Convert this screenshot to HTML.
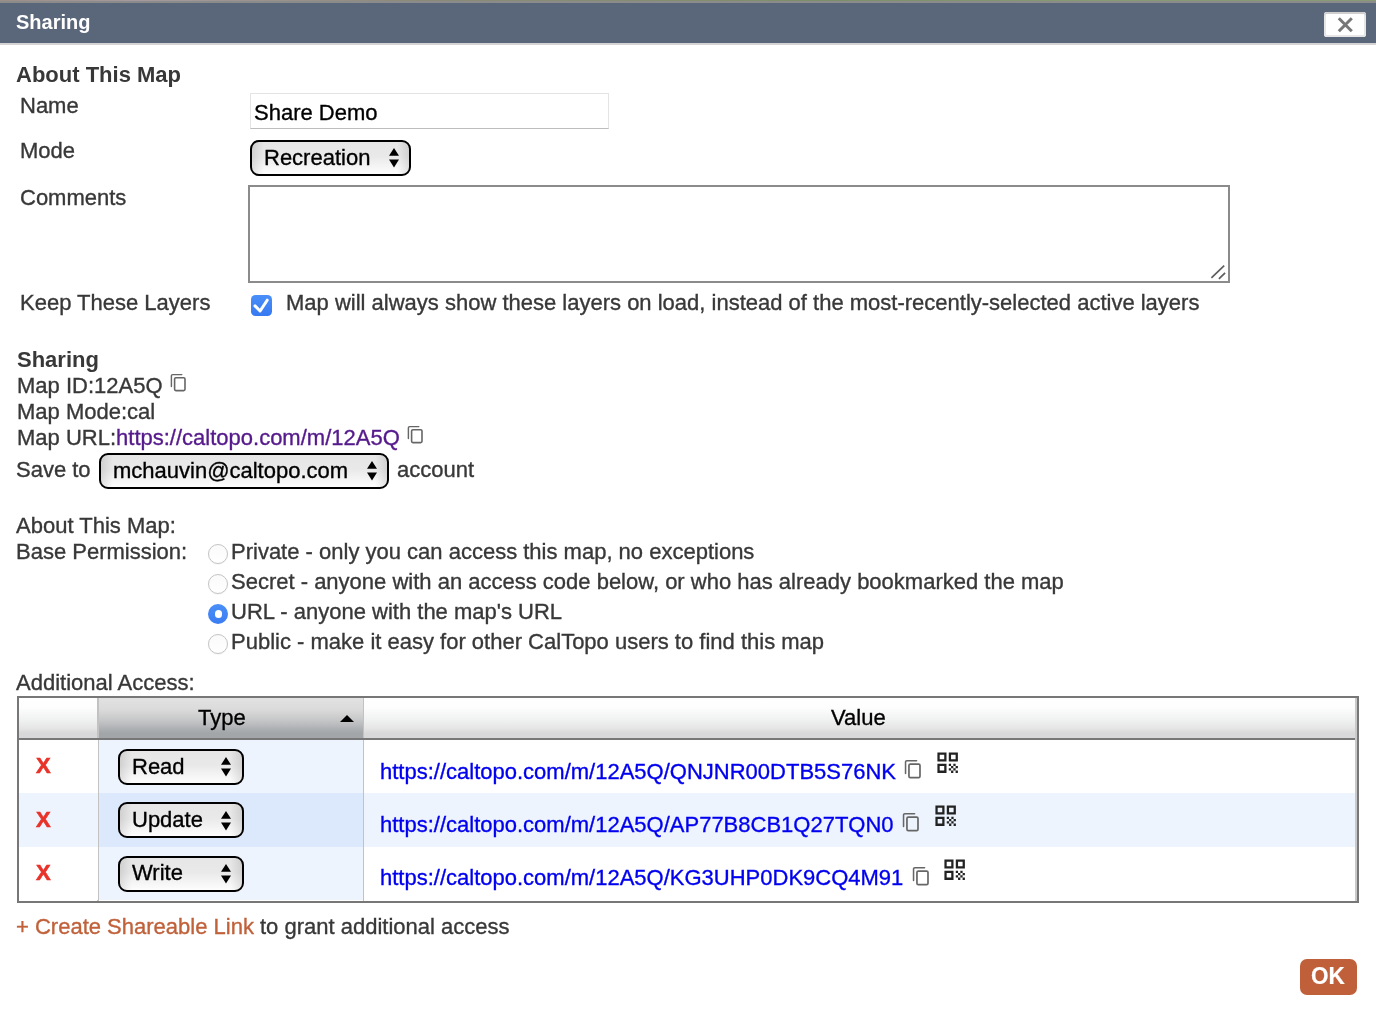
<!DOCTYPE html>
<html><head><meta charset="utf-8">
<style>
html,body{margin:0;padding:0;}
body{-webkit-font-smoothing:antialiased;width:1376px;height:1012px;overflow:hidden;background:#fff;position:relative;font-family:"Liberation Sans",sans-serif;color:#383838;}
.a{position:absolute;}
.t{position:absolute;will-change:transform;white-space:pre;font-size:22px;line-height:26px;}
.b{font-weight:bold;}
.t:not(.b),.st{-webkit-text-stroke:0.35px currentColor;}
.strip{left:0;top:0;width:1376px;height:1px;background:linear-gradient(90deg,#9a8f86,#a49aa0 10%,#8c8a7a 30%,#7d8f6a 60%,#879a72 80%,#8a9a78);}
.gline{left:0;top:1px;width:1376px;height:2px;background:#8b8b8b;}
.hdr{left:0;top:3px;width:1376px;height:40px;background:#5a6679;}
.hbord{left:0;top:43px;width:1376px;height:2px;background:#d4d4d4;}
.close{left:1324px;top:12px;width:42px;height:25px;background:#fff;border-radius:3px;box-shadow:inset 0 2px 0 #cfcfcf, inset 2px 0 0 #e6e6e6, inset -2px 0 0 #e6e6e6, inset 0 -2px 0 #e6e6e6;}
.sel{position:absolute;box-sizing:border-box;border:2px solid #000;border-radius:9px;
 background:linear-gradient(180deg,#e6e6e6 0%,#e9e9e9 45%,#f6f6f6 80%,#fdfdfd 100%);}
.sel:before{content:"";position:absolute;left:0;top:0;bottom:0;width:12px;border-radius:7px 0 0 7px;background:linear-gradient(90deg,rgba(0,0,0,0.10),rgba(0,0,0,0));}
.sel:after{content:"";position:absolute;right:0;top:0;bottom:0;width:12px;border-radius:0 7px 7px 0;background:linear-gradient(270deg,rgba(0,0,0,0.10),rgba(0,0,0,0));}
.sel .st{position:absolute;will-change:transform;white-space:pre;font-size:22px;line-height:26px;color:#000;}
.arr{position:absolute;width:10px;height:20px;}
.copy{position:absolute;width:20px;height:20px;}
.qr{position:absolute;width:27px;height:27px;}
.radio{position:absolute;width:20px;height:20px;box-sizing:border-box;border-radius:50%;border:1px solid #c4c4c4;background:linear-gradient(180deg,#fafafa,#ffffff);box-shadow:0 0.5px 1px rgba(0,0,0,0.08);}
.radio.on{border:none;background:linear-gradient(180deg,#4a8ff8,#3a7cf2);box-shadow:none;}
.radio.on:after{content:"";position:absolute;left:6.25px;top:6.25px;width:7.5px;height:7.5px;border-radius:50%;background:#fff;}
.hg{background:linear-gradient(180deg,#ffffff 0%,#fdfdfd 25%,#f0f1f1 55%,#e6e6e7 75%,#d8d8da 88%,#d8d8da 100%);}
.hgs{background:linear-gradient(180deg,#e2e2e2 0%,#dadada 30%,#c6c7c8 55%,#b0b3b6 75%,#a2a6a9 88%,#a2a6a9 100%);}
</style></head><body>
<div class="a strip"></div>
<div class="a gline"></div>
<div class="a hdr"></div>
<div class="a hbord"></div>
<div class="t b" style="left:16.4px;top:10px;font-size:20px;line-height:24px;color:#fff;">Sharing</div>
<div class="a close"><svg width="42" height="25" style="position:absolute;left:0;top:0"><path d="M14.8 6.3 L27.8 19.3 M27.8 6.3 L14.8 19.3" stroke="#777" stroke-width="3" stroke-linecap="butt"/></svg></div>

<!-- About This Map -->
<div class="t b" style="left:15.7px;top:62px;">About This Map</div>
<div class="t" style="left:20px;top:93.4px;">Name</div>
<div class="t" style="left:20px;top:138.4px;">Mode</div>
<div class="t" style="left:20px;top:185.4px;">Comments</div>
<div class="t" style="left:20px;top:290.4px;">Keep These Layers</div>

<div class="a" style="left:250px;top:93px;width:359px;height:36px;box-sizing:border-box;border:1px solid #e4e4e4;border-bottom:1.5px solid #bdbdbd;background:#fff;"></div>
<div class="t" style="left:254px;top:100.4px;color:#000;">Share Demo</div>

<div class="sel" style="left:250px;top:140px;width:161px;height:36px;">
 <div class="st" style="left:11.6px;top:3.4px;">Recreation</div>
 <svg class="arr" style="left:137px;top:5.8px;" viewBox="0 0 10 20"><path d="M5 0 L10 7.8 L0 7.8Z M0 11.6 L10 11.6 L5 19.4Z" fill="#000"/></svg>
</div>

<div class="a" style="left:248px;top:185px;width:982px;height:98px;box-sizing:border-box;border:2px solid #8b8b8b;background:#fff;"></div>
<svg class="a" style="left:1208px;top:262px;" width="20" height="20" viewBox="0 0 20 20"><path d="M3.4 15.8 L16.2 3.7 M10.9 16.9 L17.1 10.8" stroke="#5e5e5e" stroke-width="1.7"/></svg>

<div class="a" style="left:251px;top:294.8px;width:20.8px;height:21px;border-radius:4.5px;background:linear-gradient(180deg,#4a8ff8,#3679f2);">
 <svg width="20" height="20" viewBox="0 0 20 20" style="position:absolute;left:0;top:0"><path d="M4 10.9 L9.1 16 L16.2 5.2" stroke="#fff" stroke-width="3" fill="none" stroke-linecap="round" stroke-linejoin="round"/></svg>
</div>
<div class="t" style="left:285.8px;top:290px;">Map will always show these layers on load, instead of the most-recently-selected active layers</div>

<div class="t b" style="left:16.8px;top:346.8px;">Sharing</div>
<div class="t" style="left:17px;top:372.8px;">Map ID:12A5Q</div>
<svg class="copy" style="left:169px;top:373px;width:19.2px;height:19.2px" viewBox="0 0 24 24"><path d="M3 17V3.6Q3 2 4.6 2H16" stroke="#666" stroke-width="1.8" fill="none" stroke-linecap="round"/><rect x="7" y="6" width="13" height="16" rx="1.6" stroke="#666" stroke-width="2" fill="none"/></svg>
<div class="t" style="left:17px;top:398.8px;">Map Mode:cal</div>
<div class="t" style="left:17px;top:424.5px;">Map URL:<span style="color:#551a8b">https://caltopo.com/m/12A5Q</span></div>
<svg class="copy" style="left:406px;top:425px;width:19.2px;height:19.2px" viewBox="0 0 24 24"><path d="M3 17V3.6Q3 2 4.6 2H16" stroke="#666" stroke-width="1.8" fill="none" stroke-linecap="round"/><rect x="7" y="6" width="13" height="16" rx="1.6" stroke="#666" stroke-width="2" fill="none"/></svg>
<div class="t" style="left:16.4px;top:456.8px;">Save to</div>
<div class="sel" style="left:99px;top:452.5px;width:289.5px;height:36px;"><div class="st" style="left:12px;top:3.9px;">mchauvin@caltopo.com</div><svg class="arr" style="left:265.9px;top:6.5px;" viewBox="0 0 10 20"><path d="M5 0 L10 7.8 L0 7.8Z M0 11.6 L10 11.6 L5 19.4Z" fill="#000"/></svg></div>
<div class="t" style="left:396.6px;top:457.4px;">account</div>
<div class="t" style="left:15.5px;top:513.4px;">About This Map:</div>
<div class="t" style="left:15.5px;top:539.1px;">Base Permission:</div>
<div class="radio" style="left:208.3px;top:544.2px;"></div>
<div class="t" style="left:231.4px;top:538.7px;">Private - only you can access this map, no exceptions</div>
<div class="radio" style="left:208.3px;top:574.2px;"></div>
<div class="t" style="left:231.4px;top:569.3px;">Secret - anyone with an access code below, or who has already bookmarked the map</div>
<div class="radio on" style="left:208.3px;top:604.2px;"></div>
<div class="t" style="left:231.4px;top:599.4px;">URL - anyone with the map's URL</div>
<div class="radio" style="left:208.3px;top:634.2px;"></div>
<div class="t" style="left:231.4px;top:629.4px;">Public - make it easy for other CalTopo users to find this map</div>
<div class="t" style="left:16.0px;top:669.7px;">Additional Access:</div>
<div class="a" style="left:17px;top:696px;width:1342px;height:206.6px;box-sizing:border-box;border:2px solid #777;background:#fff;"></div>
<div class="a hg" style="left:19px;top:698px;width:78.5px;height:40px;"></div>
<div class="a hgs" style="left:98.5px;top:698px;width:264.5px;height:40px;"></div>
<div class="a hg" style="left:364px;top:698px;width:991px;height:40px;"></div>
<div class="a" style="left:97.2px;top:698px;width:1.5px;height:202.7px;background:#c2c2c2;"></div>
<div class="a" style="left:362.5px;top:698px;width:1.5px;height:202.7px;background:#c2c2c2;"></div>
<div class="a" style="left:1355px;top:698px;width:2px;height:202.7px;background:#c9c9c9;"></div>
<div class="a" style="left:19px;top:738px;width:1336px;height:2px;background:#777;"></div>
<div class="t" style="left:197.5px;top:705.2px;color:#000;">Type</div>
<svg class="a" style="left:339.7px;top:715px;" width="14" height="7" viewBox="0 0 14 7"><path d="M7 0 L14 7 L0 7Z" fill="#000"/></svg>
<div class="t" style="left:831px;top:705.2px;color:#000;">Value</div>
<div class="a" style="left:19px;top:740.00px;width:78.5px;height:53.33px;background:#fff"></div>
<div class="a" style="left:98.5px;top:740.00px;width:264.5px;height:53.33px;background:#edf4fe"></div>
<div class="a" style="left:364px;top:740.00px;width:991px;height:53.33px;background:#fff"></div>
<div class="t b" style="left:35.7px;top:753.4px;color:#e8332a;-webkit-text-stroke:0.6px #e8332a;">X</div>
<div class="sel" style="left:118px;top:749.00px;width:125.5px;height:36px;"><div class="st" style="left:11.7px;top:2.6px;">Read</div><svg class="arr" style="left:100.7px;top:6.3px;" viewBox="0 0 10 20"><path d="M5 0 L10 7.8 L0 7.8Z M0 11.6 L10 11.6 L5 19.4Z" fill="#000"/></svg></div>
<div class="t" style="left:379.8px;top:758.6px;color:#0000ee;">https://caltopo.com/m/12A5Q/QNJNR00DTB5S76NK</div>
<svg class="copy" style="left:903.0px;top:758.5px;width:20.4px;height:20.4px" viewBox="0 0 24 24"><path d="M3 17V3.6Q3 2 4.6 2H16" stroke="#666" stroke-width="1.8" fill="none" stroke-linecap="round"/><rect x="7" y="6" width="13" height="16" rx="1.6" stroke="#666" stroke-width="2" fill="none"/></svg>
<svg class="qr" style="left:933.99px;top:748.89px;width:27.3px;height:27.3px" viewBox="0 0 24 24"><path fill="#222" d="M3 11h8V3H3v8zm2-6h4v4H5V5zM3 21h8v-8H3v8zm2-6h4v4H5v-4zM13 3v8h8V3h-8zm6 6h-4V5h4v4zM19 19h2v2h-2zM13 13h2v2h-2zM15 15h2v2h-2zM13 17h2v2h-2zM15 19h2v2h-2zM17 17h2v2h-2zM17 13h2v2h-2zM19 15h2v2h-2z"/></svg>
<div class="a" style="left:19px;top:793.33px;width:78.5px;height:53.33px;background:#edf4fe"></div>
<div class="a" style="left:98.5px;top:793.33px;width:264.5px;height:53.33px;background:#dce8fb"></div>
<div class="a" style="left:364px;top:793.33px;width:991px;height:53.33px;background:#edf4fe"></div>
<div class="t b" style="left:35.7px;top:806.7px;color:#e8332a;-webkit-text-stroke:0.6px #e8332a;">X</div>
<div class="sel" style="left:118px;top:802.33px;width:125.5px;height:36px;"><div class="st" style="left:11.7px;top:2.6px;">Update</div><svg class="arr" style="left:100.7px;top:6.3px;" viewBox="0 0 10 20"><path d="M5 0 L10 7.8 L0 7.8Z M0 11.6 L10 11.6 L5 19.4Z" fill="#000"/></svg></div>
<div class="t" style="left:379.8px;top:811.9px;color:#0000ee;">https://caltopo.com/m/12A5Q/AP77B8CB1Q27TQN0</div>
<svg class="copy" style="left:901.0999999999999px;top:811.6px;width:20.4px;height:20.4px" viewBox="0 0 24 24"><path d="M3 17V3.6Q3 2 4.6 2H16" stroke="#666" stroke-width="1.8" fill="none" stroke-linecap="round"/><rect x="7" y="6" width="13" height="16" rx="1.6" stroke="#666" stroke-width="2" fill="none"/></svg>
<svg class="qr" style="left:931.89px;top:801.99px;width:27.3px;height:27.3px" viewBox="0 0 24 24"><path fill="#222" d="M3 11h8V3H3v8zm2-6h4v4H5V5zM3 21h8v-8H3v8zm2-6h4v4H5v-4zM13 3v8h8V3h-8zm6 6h-4V5h4v4zM19 19h2v2h-2zM13 13h2v2h-2zM15 15h2v2h-2zM13 17h2v2h-2zM15 19h2v2h-2zM17 17h2v2h-2zM17 13h2v2h-2zM19 15h2v2h-2z"/></svg>
<div class="a" style="left:19px;top:846.66px;width:78.5px;height:53.33px;background:#fff"></div>
<div class="a" style="left:98.5px;top:846.66px;width:264.5px;height:53.33px;background:#edf4fe"></div>
<div class="a" style="left:364px;top:846.66px;width:991px;height:53.33px;background:#fff"></div>
<div class="t b" style="left:35.7px;top:860.1px;color:#e8332a;-webkit-text-stroke:0.6px #e8332a;">X</div>
<div class="sel" style="left:118px;top:855.66px;width:125.5px;height:36px;"><div class="st" style="left:11.7px;top:2.6px;">Write</div><svg class="arr" style="left:100.7px;top:6.3px;" viewBox="0 0 10 20"><path d="M5 0 L10 7.8 L0 7.8Z M0 11.6 L10 11.6 L5 19.4Z" fill="#000"/></svg></div>
<div class="t" style="left:379.8px;top:865.3px;color:#0000ee;">https://caltopo.com/m/12A5Q/KG3UHP0DK9CQ4M91</div>
<svg class="copy" style="left:911.3px;top:865.7px;width:20.4px;height:20.4px" viewBox="0 0 24 24"><path d="M3 17V3.6Q3 2 4.6 2H16" stroke="#666" stroke-width="1.8" fill="none" stroke-linecap="round"/><rect x="7" y="6" width="13" height="16" rx="1.6" stroke="#666" stroke-width="2" fill="none"/></svg>
<svg class="qr" style="left:940.89px;top:856.09px;width:27.3px;height:27.3px" viewBox="0 0 24 24"><path fill="#222" d="M3 11h8V3H3v8zm2-6h4v4H5V5zM3 21h8v-8H3v8zm2-6h4v4H5v-4zM13 3v8h8V3h-8zm6 6h-4V5h4v4zM19 19h2v2h-2zM13 13h2v2h-2zM15 15h2v2h-2zM13 17h2v2h-2zM15 19h2v2h-2zM17 17h2v2h-2zM17 13h2v2h-2zM19 15h2v2h-2z"/></svg>
<div class="t" style="left:16.0px;top:914.3px;"><span style="color:#c0613a">+ Create Shareable Link</span> to grant additional access</div>
<div class="a" style="left:1300px;top:959px;width:57px;height:36px;border-radius:7px;background:#bf603a;"></div>
<div class="t b" style="left:1310.9px;top:963.8px;font-size:22.5px;color:#fff;-webkit-text-stroke:0.2px #fff;transform:scaleY(1.05);transform-origin:0 20.5px;">OK</div>
</body></html>
